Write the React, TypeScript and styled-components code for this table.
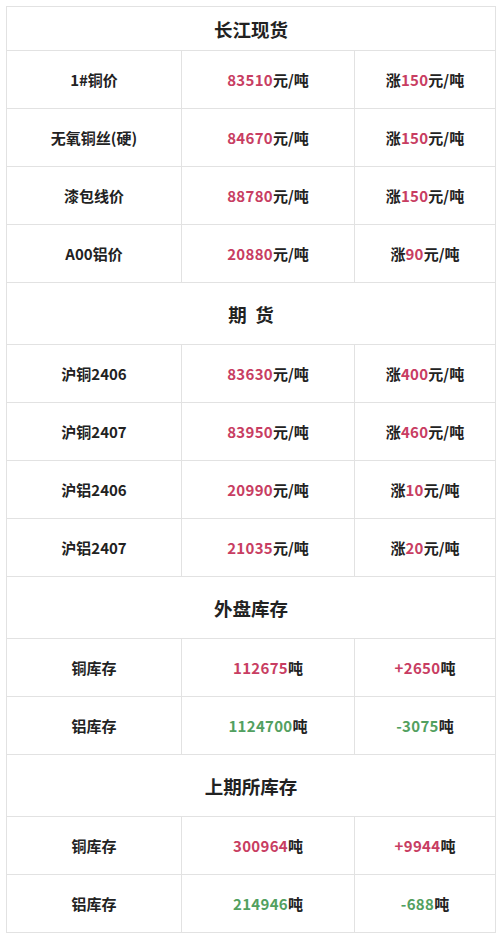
import React from 'react';
import styled, { createGlobalStyle } from 'styled-components';

const RED = '#c83d62';
const GREEN = '#52a060';
const INK = '#222222';
const LINE = '#e2e2e2';

type Tone = 'up' | 'down';

interface Amount {
  prefix?: string;
  value: string;
  unit: string;
  tone: Tone;
}

interface Row {
  label: string;
  price: Amount;
  change: Amount;
}

interface Section {
  title: string;
  tall: boolean;
  rows: Row[];
}

const up = (value: string, unit: string, prefix?: string): Amount => ({ value, unit, prefix, tone: 'up' });
const down = (value: string, unit: string, prefix?: string): Amount => ({ value, unit, prefix, tone: 'down' });

const SECTIONS: Section[] = [
  {
    title: '长江现货',
    tall: false,
    rows: [
      { label: '1#铜价', price: up('83510', '元/吨'), change: up('150', '元/吨', '涨') },
      { label: '无氧铜丝(硬)', price: up('84670', '元/吨'), change: up('150', '元/吨', '涨') },
      { label: '漆包线价', price: up('88780', '元/吨'), change: up('150', '元/吨', '涨') },
      { label: 'A00铝价', price: up('20880', '元/吨'), change: up('90', '元/吨', '涨') },
    ],
  },
  {
    title: '期\u00a0\u00a0货',
    tall: true,
    rows: [
      { label: '沪铜2406', price: up('83630', '元/吨'), change: up('400', '元/吨', '涨') },
      { label: '沪铜2407', price: up('83950', '元/吨'), change: up('460', '元/吨', '涨') },
      { label: '沪铝2406', price: up('20990', '元/吨'), change: up('10', '元/吨', '涨') },
      { label: '沪铝2407', price: up('21035', '元/吨'), change: up('20', '元/吨', '涨') },
    ],
  },
  {
    title: '外盘库存',
    tall: true,
    rows: [
      { label: '铜库存', price: up('112675', '吨'), change: up('+2650', '吨') },
      { label: '铝库存', price: down('1124700', '吨'), change: down('-3075', '吨') },
    ],
  },
  {
    title: '上期所库存',
    tall: true,
    rows: [
      { label: '铜库存', price: up('300964', '吨'), change: up('+9944', '吨') },
      { label: '铝库存', price: down('214946', '吨'), change: down('-688', '吨') },
    ],
  },
];

const GlobalStyle = createGlobalStyle`
  body {
    margin: 0;
    background: #ffffff;
    font-family: "Noto Sans CJK SC", "Noto Sans", sans-serif;
    color: ${INK};
  }
`;

const Page = styled.div`
  padding: 6px 5px 0 6px;
`;

const Table = styled.table`
  width: 489px;
  border-collapse: collapse;
  table-layout: fixed;
`;

const HeadCell = styled.th<{ $tall: boolean }>`
  height: ${(p) => (p.$tall ? 61 : 43)}px;
  padding: 0;
  border: 1px solid ${LINE};
  font-size: 18.5px;
  font-weight: 700;
  text-align: center;
  vertical-align: middle;
`;

const Cell = styled.td`
  height: 57px;
  padding: 0;
  border: 1px solid ${LINE};
  font-size: 15px;
  font-weight: 700;
  text-align: center;
  vertical-align: middle;
  white-space: nowrap;
`;

const Number = styled.span<{ $tone: Tone }>`
  color: ${(p) => (p.$tone === 'up' ? RED : GREEN)};
  letter-spacing: 0.3px;
`;

const AmountText = ({ amount }: { amount: Amount }): JSX.Element => (
  <>
    {amount.prefix}
    <Number $tone={amount.tone}>{amount.value}</Number>
    {amount.unit}
  </>
);

const App = (): JSX.Element => {
  return (
    <Page>
      <GlobalStyle />
      <Table>
        <colgroup>
          <col style={{ width: 175 }} />
          <col style={{ width: 173 }} />
          <col style={{ width: 141 }} />
        </colgroup>
        {SECTIONS.map((section) => (
          <tbody key={section.title}>
            <tr>
              <HeadCell colSpan={3} $tall={section.tall}>
                {section.title}
              </HeadCell>
            </tr>
            {section.rows.map((row) => (
              <tr key={row.label}>
                <Cell>{row.label}</Cell>
                <Cell>
                  <AmountText amount={row.price} />
                </Cell>
                <Cell>
                  <AmountText amount={row.change} />
                </Cell>
              </tr>
            ))}
          </tbody>
        ))}
      </Table>
    </Page>
  );
};

export default App;
